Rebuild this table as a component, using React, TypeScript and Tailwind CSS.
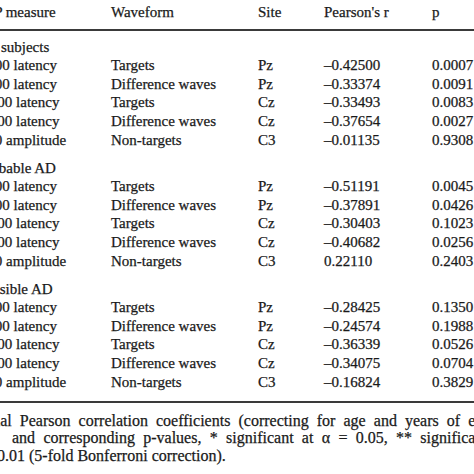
const groups = [
  {
    label: "All subjects",
    rows: [
      ["P300 latency", "Targets", "Pz", "–0.42500", "0.0007"],
      ["P300 latency", "Difference waves", "Pz", "–0.33374", "0.0091"],
      ["N200 latency", "Targets", "Cz", "–0.33493", "0.0083"],
      ["N200 latency", "Difference waves", "Cz", "–0.37654", "0.0027"],
      ["P50 amplitude", "Non-targets", "C3", "–0.01135", "0.9308"],
    ],
  },
  {
    label: "Probable AD",
    rows: [
      ["P300 latency", "Targets", "Pz", "–0.51191", "0.0045"],
      ["P300 latency", "Difference waves", "Pz", "–0.37891", "0.0426"],
      ["N200 latency", "Targets", "Cz", "–0.30403", "0.1023"],
      ["N200 latency", "Difference waves", "Cz", "–0.40682", "0.0256"],
      ["P50 amplitude", "Non-targets", "C3", "0.22110", "0.2403"],
    ],
  },
  {
    label: "Possible AD",
    rows: [
      ["P300 latency", "Targets", "Pz", "–0.28425", "0.1350"],
      ["P300 latency", "Difference waves", "Pz", "–0.24574", "0.1988"],
      ["N200 latency", "Targets", "Cz", "–0.36339", "0.0526"],
      ["N200 latency", "Difference waves", "Cz", "–0.34075", "0.0704"],
      ["P50 amplitude", "Non-targets", "C3", "–0.16824", "0.3829"],
    ],
  },
]

const cols = "grid grid-cols-[132px_147px_66px_108px_120px]"

function Row({ cells }: { cells: string[] }) {
  return (
    <div className={`${cols} h-[18.6px] leading-[18.6px] whitespace-nowrap`}>
      {cells.map((c, i) => (
        <div key={i}>{c}</div>
      ))}
    </div>
  )
}

export default function App() {
  return (
    <div
      className="w-[474px] h-[474px] overflow-hidden bg-white text-[#1a1a1a] [-webkit-text-stroke:0.25px_#1a1a1a]"
      style={{ fontFamily: '"Liberation Serif", "Times New Roman", serif' }}
    >
      <div className="ml-[-22px] w-[600px] text-[15px]">
        <div className={`${cols} h-[29px] pt-[3px] leading-[18px] whitespace-nowrap`}>
          <div className="ml-[-3px]">ERP measure</div>
          <div className="ml-[1px]">Waveform</div>
          <div className="ml-[1px]">Site</div>
          <div className="ml-[1px]">Pearson's r</div>
          <div className="ml-[1px]">p</div>
        </div>
        <div className="h-[2px] bg-[#3a3a3a]" />
        <div className="pt-[6.7px]">
          {groups.map((g, gi) => (
            <div key={g.label} className={gi > 0 ? "pt-[9.4px]" : ""}>
              <div className="h-[18.6px] leading-[18.6px]">{g.label}</div>
              {g.rows.map((r, ri) => (
                <div key={ri} className="pl-[1px]">
                  <Row cells={r} />
                </div>
              ))}
            </div>
          ))}
        </div>
        <div className="mt-[10px] h-[2px] bg-[#3a3a3a]" />
      </div>

      <div className="pt-[8.7px] text-[16px] leading-[17.6px] whitespace-nowrap">
        <div className="ml-[-30px] [word-spacing:4.1px]">
          Partial Pearson correlation coefficients (correcting for age and years of education)
        </div>
        <div className="ml-[12px] [word-spacing:4.3px]">
          and corresponding p-values, * significant at α = 0.05, ** significant at α = 0.01
        </div>
        <div className="ml-[-3px]">0.01 (5-fold Bonferroni correction).</div>
      </div>
    </div>
  )
}
